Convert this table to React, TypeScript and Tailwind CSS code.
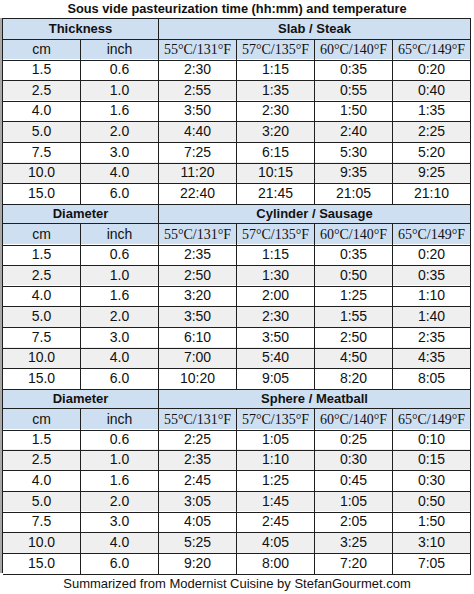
// Sous vide pasteurization table
const temps = ['55°C/131°F', '57°C/135°F', '60°C/140°F', '65°C/149°F']

interface Section {
  dim: string
  shape: string
  rows: string[][]
}

const sections: Section[] = [
  {
    dim: 'Thickness',
    shape: 'Slab / Steak',
    rows: [
      ['1.5', '0.6', '2:30', '1:15', '0:35', '0:20'],
      ['2.5', '1.0', '2:55', '1:35', '0:55', '0:40'],
      ['4.0', '1.6', '3:50', '2:30', '1:50', '1:35'],
      ['5.0', '2.0', '4:40', '3:20', '2:40', '2:25'],
      ['7.5', '3.0', '7:25', '6:15', '5:30', '5:20'],
      ['10.0', '4.0', '11:20', '10:15', '9:35', '9:25'],
      ['15.0', '6.0', '22:40', '21:45', '21:05', '21:10'],
    ],
  },
  {
    dim: 'Diameter',
    shape: 'Cylinder / Sausage',
    rows: [
      ['1.5', '0.6', '2:35', '1:15', '0:35', '0:20'],
      ['2.5', '1.0', '2:50', '1:30', '0:50', '0:35'],
      ['4.0', '1.6', '3:20', '2:00', '1:25', '1:10'],
      ['5.0', '2.0', '3:50', '2:30', '1:55', '1:40'],
      ['7.5', '3.0', '6:10', '3:50', '2:50', '2:35'],
      ['10.0', '4.0', '7:00', '5:40', '4:50', '4:35'],
      ['15.0', '6.0', '10:20', '9:05', '8:20', '8:05'],
    ],
  },
  {
    dim: 'Diameter',
    shape: 'Sphere / Meatball',
    rows: [
      ['1.5', '0.6', '2:25', '1:05', '0:25', '0:10'],
      ['2.5', '1.0', '2:35', '1:10', '0:30', '0:15'],
      ['4.0', '1.6', '2:45', '1:25', '0:45', '0:30'],
      ['5.0', '2.0', '3:05', '1:45', '1:05', '0:50'],
      ['7.5', '3.0', '4:05', '2:45', '2:05', '1:50'],
      ['10.0', '4.0', '5:25', '4:05', '3:25', '3:10'],
      ['15.0', '6.0', '9:20', '8:00', '7:20', '7:05'],
    ],
  },
]

const cell = 'flex items-center justify-center border-r border-b border-[#1f1f1f]'

export default function App() {
  return (
    <div className="w-[474px] h-[594px] bg-white flex flex-col font-['Liberation_Sans',Arial,sans-serif] text-[#111]">
      {/* Title */}
      <div className="h-[18px] flex items-center justify-center text-[12.8px] font-bold leading-none">
        Sous vide pasteurization time (hh:mm) and temperature
      </div>

      {/* Table */}
      <div className="flex pr-[3px]">
        <div className="w-[2px] bg-[#a8a8a8]" />
        <div className="flex-1 border-l border-t border-[#1f1f1f]">
          {sections.map((s, si) => (
            <div key={si}>
              <div className="grid grid-cols-6 h-[20px] bg-[#cfdff2] text-[13px] font-bold">
                <div className={`col-span-2 ${cell}`}>{s.dim}</div>
                <div className={`col-span-4 ${cell}`}>{s.shape}</div>
              </div>
              <div className="grid grid-cols-6 h-[20px] bg-[#cfdff2]">
                <div className={`${cell} text-[14px]`}>cm</div>
                <div className={`${cell} text-[14px]`}>inch</div>
                {temps.map(t => (
                  <div key={t} className={`${cell} text-[14px] font-['Liberation_Serif',serif]`}>
                    {t}
                  </div>
                ))}
              </div>
              {s.rows.map((r, ri) => (
                <div key={ri} className={`grid grid-cols-6 h-[20.7px] ${ri % 2 === 1 ? 'bg-[#efefef]' : 'bg-white'}`}>
                  {r.map((v, ci) => (
                    <div key={ci} className={`${cell} text-[14px]`}>
                      {v}
                    </div>
                  ))}
                </div>
              ))}
            </div>
          ))}
        </div>
      </div>

      {/* Footer */}
      <div className="flex-1 flex items-center justify-center text-[13px]">
        Summarized from Modernist Cuisine by StefanGourmet.com
      </div>
    </div>
  )
}
